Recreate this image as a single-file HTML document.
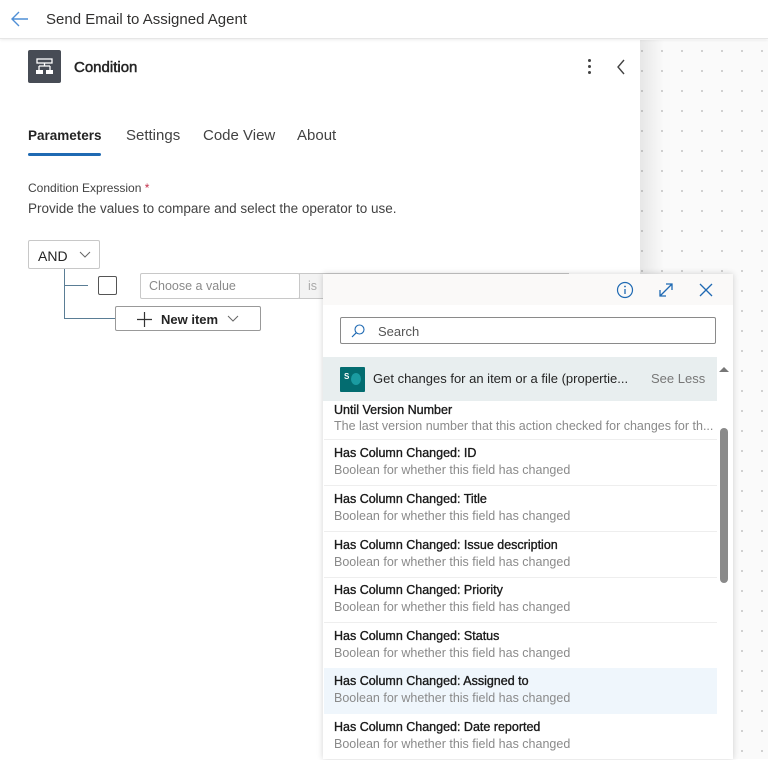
<!DOCTYPE html>
<html><head><meta charset="utf-8"><style>
*{box-sizing:border-box;margin:0;padding:0}
body{width:768px;height:759px;overflow:hidden;font-family:"Segoe UI","Liberation Sans",sans-serif;background:#fff;position:relative;color:#242424}
.canvas{position:absolute;left:640px;top:40px;width:128px;height:719px;background-color:#fafafa;background-image:radial-gradient(circle,#c8c8c8 0.8px,transparent 1.2px);background-size:20px 20px;background-position:-8px 1px}
.shadow{position:absolute;left:640px;top:40px;width:24px;height:719px;background:linear-gradient(to right,rgba(0,0,0,0.08),rgba(0,0,0,0))}
.top{position:absolute;left:0;top:0;width:768px;height:39px;background:#fff;border-bottom:1px solid #e6e6e6;box-shadow:0 1px 3px rgba(0,0,0,0.08)}
.top .t{position:absolute;left:46px;top:11px;font-size:15px;color:#323130}
.abs{position:absolute}
.tab{position:absolute;top:127px;font-size:15px;color:#424242}
.field{position:absolute;border:1px solid #c8c8c8;background:#fff}
.pop{position:absolute;left:323px;top:274px;width:410px;height:485px;background:#fff;box-shadow:0 0 6px rgba(0,0,0,0.18)}
.ph{position:absolute;left:0;top:0;width:410px;height:31px;background:#faf9f8}
.row{position:absolute;left:1px;width:393px;height:46px;border-bottom:1px solid #eee}
.row .a{position:absolute;left:10px;top:6px;font-size:12.5px;color:#1a1a1a;white-space:nowrap;-webkit-text-stroke:0.35px #1a1a1a}
.row .b{position:absolute;left:10px;top:23px;font-size:12.5px;color:#8a8a8a;white-space:nowrap}
</style></head><body>
<div class="canvas"></div><div class="shadow"></div>
<div class="top">
<svg class="abs" style="left:10px;top:10px" width="20" height="18" viewBox="0 0 20 18"><path d="M18 9H2M9 2L2 9l7 7" fill="none" stroke="#4f8fd6" stroke-width="1.4"/></svg>
<div class="t">Send Email to Assigned Agent</div></div>
<div class="abs" style="left:28px;top:50px;width:33px;height:33px;background:#474c55;border-radius:2px">
<svg width="33" height="33" viewBox="0 0 33 33"><g fill="none" stroke="#fff" stroke-width="1.3"><rect x="9" y="9" width="15" height="4"/><path d="M16.5 13v3M11 16h11M11 16v6M22 16v6"/></g><rect x="8" y="20" width="7" height="4" fill="#fff"/><rect x="18" y="20" width="7" height="4" fill="#fff"/></svg></div>
<div class="abs" style="left:74px;top:59px;font-size:15px;color:#242424;-webkit-text-stroke:0.5px #242424">Condition</div>
<div class="abs" style="left:588px;top:59px;width:4px"><div style="width:3px;height:3px;background:#424242;border-radius:50%;margin-bottom:3px"></div><div style="width:3px;height:3px;background:#424242;border-radius:50%;margin-bottom:3px"></div><div style="width:3px;height:3px;background:#424242;border-radius:50%"></div></div>
<svg class="abs" style="left:615px;top:58px" width="12" height="18" viewBox="0 0 12 18"><path d="M9 2L3 9l6 7" fill="none" stroke="#424242" stroke-width="1.4"/></svg>
<div class="tab" style="left:28px;top:128px;font-size:13.5px;font-weight:bold;color:#242424">Parameters</div>
<div class="abs" style="left:28px;top:153px;width:73px;height:3px;background:#1f6ab3;border-radius:2px"></div>
<div class="tab" style="left:126px">Settings</div>
<div class="tab" style="left:203px">Code View</div>
<div class="tab" style="left:297px">About</div>
<div class="abs" style="left:28px;top:181px;font-size:12px;color:#424242">Condition Expression <span style="color:#c4314b">*</span></div>
<div class="abs" style="left:28px;top:201px;font-size:13.5px;color:#424242">Provide the values to compare and select the operator to use.</div>
<div class="field" style="left:28px;top:240px;width:72px;height:29px;border-radius:2px"><span class="abs" style="left:9px;top:7px;font-size:14px">AND</span>
<svg class="abs" style="left:50px;top:10px" width="12" height="8" viewBox="0 0 12 8"><path d="M1 1l5 5 5-5" fill="none" stroke="#666" stroke-width="1"/></svg></div>
<div class="abs" style="left:64px;top:269px;width:1px;height:50px;background:#5a7d95"></div>
<div class="abs" style="left:64px;top:285px;width:24px;height:1px;background:#5a7d95"></div>
<div class="abs" style="left:64px;top:318px;width:52px;height:1px;background:#5a7d95"></div>
<div class="abs" style="left:98px;top:276px;width:19px;height:19px;border:1px solid #555;border-radius:2px"></div>
<div class="field" style="left:140px;top:273px;width:160px;height:26px;border-radius:2px"><span class="abs" style="left:8px;top:5px;font-size:12.5px;color:#8a8a8a">Choose a value</span></div>
<div class="field" style="left:299px;top:273px;width:270px;height:26px;background:#f3f3f3"><span class="abs" style="left:8px;top:5px;font-size:12.5px;color:#aaa">is</span></div>
<div class="field" style="left:115px;top:306px;width:146px;height:25px;border-radius:2px;border-color:#999">
<svg class="abs" style="left:20px;top:4px" width="17" height="17" viewBox="0 0 17 17"><path d="M8.5 1v15M1 8.5h15" stroke="#333" stroke-width="1.2"/></svg>
<span class="abs" style="left:45px;top:5px;font-size:13px;font-weight:bold">New item</span>
<svg class="abs" style="left:111px;top:8px" width="12" height="8" viewBox="0 0 12 8"><path d="M1 1l5 5 5-5" fill="none" stroke="#666" stroke-width="1"/></svg></div>
<div class="pop">
<div class="ph">
<svg class="abs" style="left:293px;top:7px" width="18" height="18" viewBox="0 0 18 18"><circle cx="9" cy="9" r="7.5" fill="none" stroke="#1f6ab3" stroke-width="1.2"/><path d="M9 8v5" stroke="#1f6ab3" stroke-width="1.3"/><circle cx="9" cy="5.5" r="0.9" fill="#1f6ab3"/></svg>
<svg class="abs" style="left:334px;top:7px" width="18" height="18" viewBox="0 0 18 18"><path d="M3 15L15 3M9 3h6v6M3 9v6h6" fill="none" stroke="#1f6ab3" stroke-width="1.3"/></svg>
<svg class="abs" style="left:376px;top:9px" width="14" height="14" viewBox="0 0 14 14"><path d="M1 1l12 12M13 1L1 13" stroke="#1f6ab3" stroke-width="1.3"/></svg>
</div>
<div class="abs" style="left:17px;top:43px;width:376px;height:27px;border:1px solid #8a8a8a;border-radius:2px">
<svg class="abs" style="left:9px;top:5px" width="16" height="16" viewBox="0 0 16 16"><circle cx="9.5" cy="6.5" r="4.5" fill="none" stroke="#1f6ab3" stroke-width="1.1"/><path d="M6.3 9.7L2 14" stroke="#1f6ab3" stroke-width="1.2"/></svg>
<span class="abs" style="left:37px;top:6px;font-size:13px;color:#555">Search</span></div>
<div class="abs" style="left:0;top:83px;width:394px;height:44px;background:#e8eeef">
<div class="abs" style="left:17px;top:10px;width:25px;height:25px;background:#036c70;border-radius:1px"><span class="abs" style="left:4px;top:5px;font-size:8px;color:#fff;font-weight:bold">S</span><div class="abs" style="left:11px;top:6px;width:10px;height:12px;background:#1a9ba1;border-radius:50%"></div></div>
<span class="abs" style="left:50px;top:14px;font-size:13px;color:#242424;white-space:nowrap">Get changes for an item or a file (propertie...</span>
<span class="abs" style="left:328px;top:14px;font-size:13px;color:#777">See Less</span></div>
<svg class="abs" style="left:395px;top:91px" width="12" height="8" viewBox="0 0 12 8"><path d="M1 7L6 2l5 5z" fill="#777"/></svg>
<div class="abs" style="left:397px;top:154px;width:8px;height:155px;background:#8a8a8a;border-radius:4px"></div>
<div class="row" style="top:127px;height:39px"><div class="a" style="top:2px">Until Version Number</div><div class="b" style="top:18px">The last version number that this action checked for changes for th...</div></div>
<div class="row" style="top:166px"><div class="a">Has Column Changed: ID</div><div class="b">Boolean for whether this field has changed</div></div>
<div class="row" style="top:212px"><div class="a">Has Column Changed: Title</div><div class="b">Boolean for whether this field has changed</div></div>
<div class="row" style="top:258px"><div class="a">Has Column Changed: Issue description</div><div class="b">Boolean for whether this field has changed</div></div>
<div class="row" style="top:303px"><div class="a">Has Column Changed: Priority</div><div class="b">Boolean for whether this field has changed</div></div>
<div class="row" style="top:349px"><div class="a">Has Column Changed: Status</div><div class="b">Boolean for whether this field has changed</div></div>
<div class="row" style="top:394px;background:#eff6fc;border:none"><div class="a">Has Column Changed: Assigned to</div><div class="b">Boolean for whether this field has changed</div></div>
<div class="row" style="top:440px;border:none"><div class="a">Has Column Changed: Date reported</div><div class="b">Boolean for whether this field has changed</div></div>
</div>
</body></html>
